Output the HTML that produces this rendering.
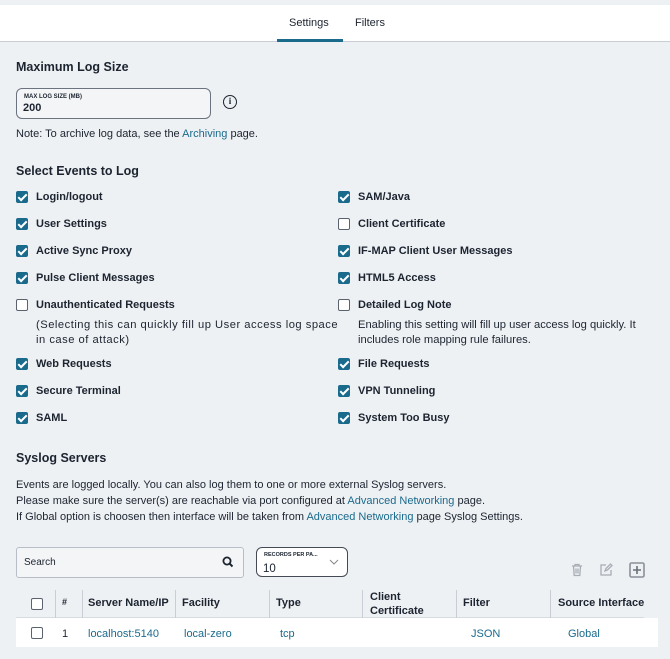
<!DOCTYPE html>
<html><head><style>
*{margin:0;padding:0;box-sizing:border-box}
body{width:670px;height:659px;background:#eef1f4;font-family:"Liberation Sans",sans-serif;color:#1c2430;position:relative;overflow:hidden;font-size:11px}
.a{position:absolute;white-space:nowrap}
.tabs{position:absolute;left:0;top:5px;width:670px;height:37px;background:#fff;border-bottom:1px solid #c9ced6}
.h{font-weight:bold;font-size:12.5px}
.cb{position:absolute;width:12px;height:12px;border:1px solid #5a6270;border-radius:2px;background:#fff}
.cb.on{background:#1a6a8c;border-color:#1a6a8c}
.cb.on:after{content:"";position:absolute;left:3px;top:0px;width:3px;height:7px;border:solid #fff;border-width:0 2px 2px 0;transform:rotate(45deg)}
.lb{font-weight:bold;font-size:11px}
.lnk{color:#1a6a8c}
.th{font-weight:bold;font-size:11px}
</style></head><body>
<div class="tabs"></div>
<div class="a" style="left:289px;top:17px;font-size:11px">Settings</div>
<div class="a" style="left:277px;top:39px;width:66px;height:3px;background:#1a6a8c"></div>
<div class="a" style="left:355px;top:17px;font-size:11px">Filters</div>
<div class="a h" style="left:16px;top:60px">Maximum Log Size</div>
<div class="a" style="left:16px;top:88px;width:195px;height:31px;border:1px solid #6b7280;border-radius:6px;background:#f4f5f7"></div>
<div class="a" style="left:24px;top:94px;font-size:6px;font-weight:bold">MAX LOG SIZE (MB)</div>
<div class="a" style="left:23px;top:102px;font-size:11px;font-weight:bold">200</div>
<div class="a" style="left:223px;top:95px;width:14px;height:14px;border:1.5px solid #1c2430;border-radius:50%;font-size:9px;font-weight:bold;text-align:center;line-height:11px;font-family:'Liberation Serif',serif">i</div>
<div class="a" style="left:16px;top:128px">Note: To archive log data, see the <span class="lnk">Archiving</span> page.</div>
<div class="a h" style="left:16px;top:164px">Select Events to Log</div>

<div class="cb on" style="left:16px;top:191px"></div><div class="a lb" style="left:36px;top:191px">Login/logout</div>
<div class="cb on" style="left:16px;top:218px"></div><div class="a lb" style="left:36px;top:218px">User Settings</div>
<div class="cb on" style="left:16px;top:245px"></div><div class="a lb" style="left:36px;top:245px">Active Sync Proxy</div>
<div class="cb on" style="left:16px;top:272px"></div><div class="a lb" style="left:36px;top:272px">Pulse Client Messages</div>
<div class="cb" style="left:16px;top:299px"></div><div class="a lb" style="left:36px;top:299px">Unauthenticated Requests</div>
<div class="a" style="left:36px;top:318px;font-size:11.2px;line-height:15px;letter-spacing:0.5px">(Selecting this can quickly fill up User access log space<br>in case of attack)</div>
<div class="cb on" style="left:16px;top:358px"></div><div class="a lb" style="left:36px;top:358px">Web Requests</div>
<div class="cb on" style="left:16px;top:385px"></div><div class="a lb" style="left:36px;top:385px">Secure Terminal</div>
<div class="cb on" style="left:16px;top:412px"></div><div class="a lb" style="left:36px;top:412px">SAML</div>

<div class="cb on" style="left:338px;top:191px"></div><div class="a lb" style="left:358px;top:191px">SAM/Java</div>
<div class="cb" style="left:338px;top:218px"></div><div class="a lb" style="left:358px;top:218px">Client Certificate</div>
<div class="cb on" style="left:338px;top:245px"></div><div class="a lb" style="left:358px;top:245px">IF-MAP Client User Messages</div>
<div class="cb on" style="left:338px;top:272px"></div><div class="a lb" style="left:358px;top:272px">HTML5 Access</div>
<div class="cb" style="left:338px;top:299px"></div><div class="a lb" style="left:358px;top:299px">Detailed Log Note</div>
<div class="a" style="left:358px;top:318px;font-size:11.2px;line-height:15px">Enabling this setting will fill up user access log quickly. It<br>includes role mapping rule failures.</div>
<div class="cb on" style="left:338px;top:358px"></div><div class="a lb" style="left:358px;top:358px">File Requests</div>
<div class="cb on" style="left:338px;top:385px"></div><div class="a lb" style="left:358px;top:385px">VPN Tunneling</div>
<div class="cb on" style="left:338px;top:412px"></div><div class="a lb" style="left:358px;top:412px">System Too Busy</div>

<div class="a h" style="left:16px;top:451px">Syslog Servers</div>
<div class="a" style="left:16px;top:477px;font-size:11px;line-height:16px">Events are logged locally. You can also log them to one or more external Syslog servers.<br>Please make sure the server(s) are reachable via port configured at <span class="lnk">Advanced Networking</span> page.<br>If Global option is choosen then interface will be taken from <span class="lnk">Advanced Networking</span> page Syslog Settings.</div>

<div class="a" style="left:16px;top:547px;width:228px;height:31px;border:1px solid #b8bec8;border-radius:3px;background:#f4f5f7"></div>
<div class="a" style="left:24px;top:557px;font-size:10px">Search</div>
<svg class="a" style="left:222px;top:556px" width="12" height="12" viewBox="0 0 12 12"><circle cx="5" cy="5" r="3.6" fill="none" stroke="#1c2430" stroke-width="1.8"/><path d="M7.6 7.6L10.5 10.5" stroke="#1c2430" stroke-width="2"/></svg>
<div class="a" style="left:256px;top:547px;width:92px;height:30px;border:1px solid #444b55;border-radius:6px;background:#fff"></div>
<div class="a" style="left:264px;top:552px;font-size:5.5px;font-weight:bold">RECORDS PER PA...</div>
<div class="a" style="left:263px;top:563px;font-size:11.5px">10</div>
<svg class="a" style="left:329px;top:559px" width="10" height="6"><path d="M1 1L5 5L9 1" fill="none" stroke="#888" stroke-width="1"/></svg>
<svg class="a" style="left:570px;top:563px" width="14" height="14" viewBox="0 0 14 14"><path d="M2 3h10M5 3V1.5h4V3M3.5 3l.7 9.5h5.6l.7-9.5M6 5.5v5M8 5.5v5" fill="none" stroke="#a8adb5" stroke-width="1.3"/></svg>
<svg class="a" style="left:599px;top:563px" width="14" height="14" viewBox="0 0 14 14"><path d="M7 2H2v10h10V7M6 8l1-2.5L11.5 1l1.5 1.5L8.5 7z" fill="none" stroke="#a8adb5" stroke-width="1.3"/></svg>
<svg class="a" style="left:629px;top:562px" width="16" height="16" viewBox="0 0 16 16"><rect x="1" y="1" width="14" height="14" rx="1.5" fill="none" stroke="#8a9099" stroke-width="1.6"/><path d="M8 4v8M4 8h8" stroke="#6a7079" stroke-width="1.6"/></svg>

<div class="a" style="left:16px;top:588px;width:628px;height:30px;background:#eef1f4;border-bottom:1px solid #d7dbe0"></div>
<div class="a" style="left:55px;top:590px;width:1px;height:28px;background:#c9ced6"></div>
<div class="a" style="left:82px;top:590px;width:1px;height:28px;background:#c9ced6"></div>
<div class="a" style="left:175px;top:590px;width:1px;height:28px;background:#c9ced6"></div>
<div class="a" style="left:269px;top:590px;width:1px;height:28px;background:#c9ced6"></div>
<div class="a" style="left:362px;top:590px;width:1px;height:28px;background:#c9ced6"></div>
<div class="a" style="left:456px;top:590px;width:1px;height:28px;background:#c9ced6"></div>
<div class="a" style="left:550px;top:590px;width:1px;height:28px;background:#c9ced6"></div>
<div class="cb" style="left:31px;top:598px"></div>
<div class="a th" style="left:62px;top:597px;font-size:9px">#</div>
<div class="a th" style="left:88px;top:597px">Server Name/IP</div>
<div class="a th" style="left:182px;top:597px">Facility</div>
<div class="a th" style="left:276px;top:597px">Type</div>
<div class="a th" style="left:370px;top:590px;line-height:14px">Client<br>Certificate</div>
<div class="a th" style="left:463px;top:597px">Filter</div>
<div class="a th" style="left:558px;top:597px">Source Interface</div>
<div class="a" style="left:16px;top:618px;width:642px;height:29px;background:#fff"></div>
<div class="cb" style="left:31px;top:627px"></div>
<div class="a" style="left:62px;top:628px">1</div>
<div class="a lnk" style="left:88px;top:628px">localhost:5140</div>
<div class="a lnk" style="left:184px;top:628px">local-zero</div>
<div class="a lnk" style="left:280px;top:628px">tcp</div>
<div class="a lnk" style="left:471px;top:628px">JSON</div>
<div class="a lnk" style="left:568px;top:628px">Global</div>
</body></html>
